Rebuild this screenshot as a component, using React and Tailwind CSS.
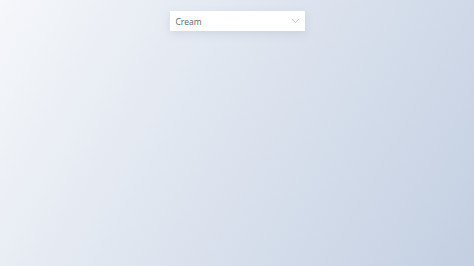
export default function App() {
  return (
    <div className="h-[266px] w-full bg-[linear-gradient(120deg,#f5f7fa_0%,#c3cfe2_100%)] flex justify-center pt-[11px] font-['Open_Sans',sans-serif]">
      <div className="w-[135px] h-[20px] bg-white shadow-[0_3px_8px_rgba(100,116,139,0.15)] flex items-center justify-between pl-[6px] pr-[5px]">
        <span className="mt-[2px] text-[8.5px] text-[#666] leading-none">Cream</span>
        <svg width="9" height="6" viewBox="0 0 9 6" fill="none">
          <path d="M1 1.2 L4.5 4.5 L8 1.2" stroke="#c4c7cc" strokeWidth="1" />
        </svg>
      </div>
    </div>
  )
}
